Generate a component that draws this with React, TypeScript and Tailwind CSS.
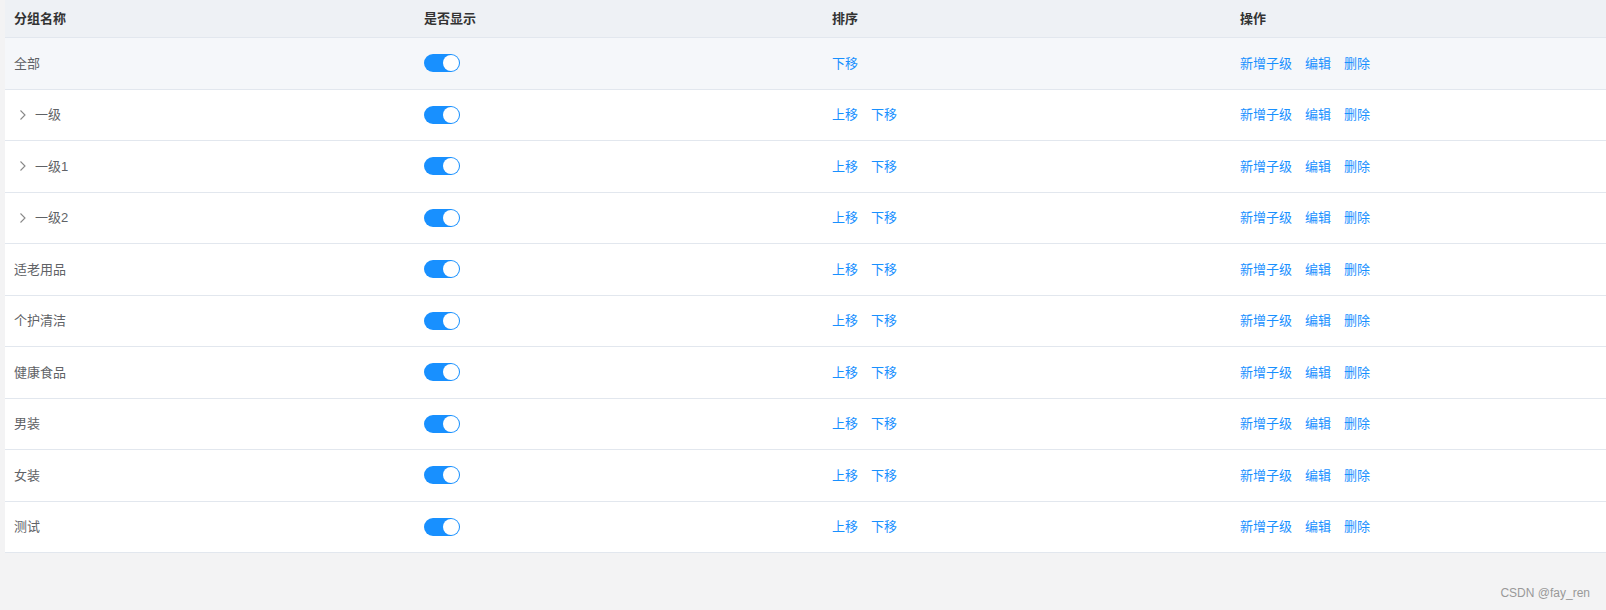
const rows = [
  { name: '全部', up: false, expand: false },
  { name: '一级', up: true, expand: true },
  { name: '一级1', up: true, expand: true },
  { name: '一级2', up: true, expand: true },
  { name: '适老用品', up: true, expand: false },
  { name: '个护清洁', up: true, expand: false },
  { name: '健康食品', up: true, expand: false },
  { name: '男装', up: true, expand: false },
  { name: '女装', up: true, expand: false },
  { name: '测试', up: true, expand: false },
];

const cols = 'grid grid-cols-[410px_408px_408px_1fr]';

function Toggle() {
  return (
    <span className="flex h-[18px] w-9 items-center justify-end rounded-full bg-[#1890ff] pr-[1px]">
      <span className="h-4 w-4 rounded-full bg-white" />
    </span>
  );
}

export default function App() {
  return (
    <div
      className="relative h-[610px] w-[1606px] overflow-hidden bg-[#f3f3f4] pl-[5px] text-[13px]"
      style={{ fontFamily: '"Liberation Sans", "Noto Sans CJK SC", sans-serif' }}
    >
      <div className="bg-white">
        <div className={`${cols} h-[38px] items-center border-b border-[#e2e7ee] bg-[#eef1f5] font-bold text-[#333]`}>
          <div className="pl-[9px]">分组名称</div>
          <div className="pl-[9px]">是否显示</div>
          <div className="pl-[9px]">排序</div>
          <div className="pl-[9px]">操作</div>
        </div>
        {rows.map((r, i) => (
          <div
            key={r.name}
            className={`${cols} h-[51.5px] items-center border-b border-[#e2e7ee] text-[#606266] ${i === 0 ? 'bg-[#f5f7fa]' : ''}`}
          >
            <div className="flex items-center pl-[9px]">
              {r.expand && (
                <svg viewBox="0 0 12 12" className="ml-[3px] mr-[6px] h-3 w-3 text-[#888]" fill="none" stroke="currentColor" strokeWidth="1.1">
                  <path d="M3.5 1.5 8 6l-4.5 4.5" />
                </svg>
              )}
              <span>{r.name}</span>
            </div>
            <div className="pl-[9px]">
              <Toggle />
            </div>
            <div className="flex gap-[13px] pl-[9px] text-[#1890ff]">
              {r.up && <span>上移</span>}
              <span>下移</span>
            </div>
            <div className="flex gap-[13px] pl-[9px] text-[#1890ff]">
              <span>新增子级</span>
              <span>编辑</span>
              <span>删除</span>
            </div>
          </div>
        ))}
      </div>
      <div className="absolute bottom-[8px] right-[16px] text-[12px] text-[#999]">CSDN @fay_ren</div>
    </div>
  );
}
